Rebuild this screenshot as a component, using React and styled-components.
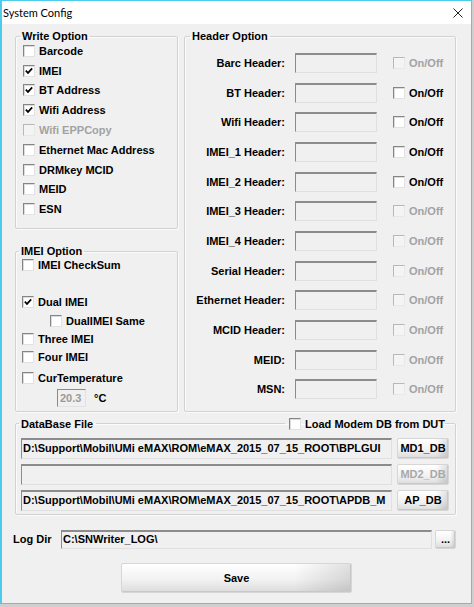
import React from 'react';
import styled, { createGlobalStyle } from 'styled-components';

const Global = createGlobalStyle`
  html, body { margin: 0; padding: 0; background: #cfcfcf; }
  body { width: 474px; height: 607px; overflow: hidden; font-family: "Liberation Sans", Arial, sans-serif; }
  * { box-sizing: border-box; }
`;

const Window = styled.div`
  width: 472px;
  height: 604px;
  border: 1px solid #4ccbea;
  border-left-width: 2px;
  background: #f0f0f0;
  display: flex;
  flex-direction: column;
`;

const TitleBar = styled.div`
  height: 23px;
  flex: none;
  background: #fff;
  display: flex;
  align-items: center;
  justify-content: space-between;
  padding: 0 8px 0 1px;
  font-family: Lato, "Noto Sans", sans-serif;
  font-size: 11px;
  color: #000;
`;

const Body = styled.div`
  padding: 5px 15px 0 11px;
  display: flex;
  flex-direction: column;
`;

const TopRow = styled.div`
  display: flex;
  gap: 6px;
  margin-left: 2px;
`;

const LeftCol = styled.div`
  width: 163px;
  display: flex;
  flex-direction: column;
  gap: 15px;
`;

const Group = styled.fieldset`
  margin: 0;
  min-width: 0;
  border: 1px solid #d2d2d2;
  border-radius: 2px;
  box-shadow: inset 1px 1px 0 #fbfbfb, 1px 1px 0 #fbfbfb;
  padding: 0 0 ${p => p.$pb || 0}px 0;
  flex: ${p => (p.$grow ? 1 : 'none')};
`;

const Legend = styled.legend`
  padding: 0 2px;
  margin-left: ${p => p.$ml || 4}px;
  font-size: 11px;
  font-weight: bold;
  line-height: 14px;
  color: #000;
`;

const WideLegend = styled(Legend)`
  display: flex;
  align-items: center;
  width: 426px;
  padding: 0 0 0 2px;
`;

const LegendLine = styled.span`
  flex: 1;
  height: 1px;
  margin: 0 4px 0 3px;
  background: #d2d2d2;
  box-shadow: 0 1px 0 #fbfbfb;
`;

const List = styled.div`
  display: flex;
  flex-direction: column;
  margin-top: ${p => p.$mt || 0}px;
  padding-left: ${p => p.$pl || 0}px;
`;

const CheckRow = styled.label`
  display: flex;
  align-items: center;
  gap: 4px;
  height: ${p => p.$h || 19.8}px;
  margin-top: ${p => p.$mt || 0}px;
  padding-left: ${p => p.$indent || 0}px;
  font-size: 11px;
  font-weight: bold;
  white-space: nowrap;
  color: ${p => (p.$disabled ? '#a2a2a2' : '#000')};
`;

const Box = styled.span`
  width: 12px;
  height: 12px;
  flex: none;
  border: 1px solid;
  border-color: ${p => (p.$disabled ? '#b8b8b8 #e8e8e8 #e8e8e8 #b8b8b8' : '#858585 #e2e2e2 #e2e2e2 #858585')};
  background: ${p => (p.$disabled ? '#f4f4f4' : '#fff')};
  box-shadow: ${p => (p.$disabled ? 'none' : 'inset 1px 1px 0 #dcdcdc')};
  display: flex;
  align-items: center;
  justify-content: center;
`;

const Check = ({ checked, disabled }) => (
  <Box $disabled={disabled}>
    {checked && (
      <svg width="8" height="8" viewBox="0 0 8 8">
        <path d="M0.8 3.6 L3 5.9 L7.2 1.4" fill="none" stroke="#000" strokeWidth="1.7" />
      </svg>
    )}
  </Box>
);

const Option = ({ label, checked, disabled, indent, h, mt }) => (
  <CheckRow $disabled={disabled} $indent={indent} $h={h} $mt={mt}>
    <Check checked={checked} disabled={disabled} />
    {label}
  </CheckRow>
);

const TempRow = styled.div`
  display: flex;
  align-items: center;
  gap: 8px;
  height: 19px;
  margin-top: 2px;
  padding-left: 35px;
  font-size: 11px;
  font-weight: bold;
`;

const TempBox = styled.div`
  width: 29px;
  height: 18px;
  border: 1px solid;
  border-color: #8a8a8a #e2e2e2 #e2e2e2 #8a8a8a;
  background: #f0f0f0;
  color: #9a9a9a;
  font-size: 11px;
  font-weight: bold;
  line-height: 16px;
  padding-left: 2px;
`;

const HeaderRows = styled.div`
  padding: 5px 0 0 4px;
`;

const HeaderRow = styled.div`
  display: flex;
  align-items: center;
  height: 29.7px;
  font-size: 11px;
  font-weight: bold;
`;

const HeaderLabel = styled.span`
  width: 96px;
  text-align: right;
  white-space: nowrap;
  margin-right: 10px;
`;

const Field = styled.div`
  width: ${p => p.$w}px;
  height: ${p => p.$h || 20}px;
  flex: none;
  border: 1px solid;
  border-top-width: 2px;
  border-color: #8c8c8c #e0e0e0 #e0e0e0 #8c8c8c;
  background: #f0f0f0;
  font-size: 11px;
  font-weight: bold;
  color: #000;
  white-space: nowrap;
  overflow: hidden;
  text-overflow: clip;
  padding-left: 1px;
  line-height: ${p => (p.$h || 20) - 4}px;
`;

const OnOff = styled.div`
  margin-left: 16px;
`;

const DbRows = styled.div`
  display: flex;
  flex-direction: column;
  gap: 5px;
  padding: 7px 5px 0 5px;
`;

const DbRow = styled.div`
  display: flex;
  gap: 5px;
  height: 21px;
`;

const Btn = styled.button`
  width: ${p => p.$w}px;
  height: ${p => p.$h}px;
  margin: 0 0 0 ${p => p.$ml || 0}px;
  padding: 0;
  flex: none;
  border: 1px solid #d6d6d6;
  border-radius: 2px;
  background: linear-gradient(to right, rgba(255, 255, 255, 0) 75%, rgba(0, 0, 0, 0.12) 100%),
    linear-gradient(#ffffff, #f2f2f2 55%, #dcdcdc);
  box-shadow: inset -1px -1px 0 #c8c8c8;
  font-family: "Liberation Sans", Arial, sans-serif;
  font-size: 11px;
  font-weight: bold;
  color: ${p => (p.disabled ? '#a8a8a8' : '#000')};
`;

const LogRow = styled.div`
  display: flex;
  align-items: center;
  height: 19px;
  margin-top: 15px;
  font-size: 11px;
  font-weight: bold;
`;

const LogLabel = styled.span`
  width: 50px;
`;

const SaveRow = styled.div`
  display: flex;
  justify-content: center;
  margin-top: 14px;
  padding-left: 4px;
`;

const DbGroup = styled(Group)`
  margin-top: 5px;
  margin-left: 2px;
`;

const headers = [
  ['Barc Header:', false],
  ['BT Header:', true],
  ['Wifi Header:', true],
  ['IMEI_1 Header:', true],
  ['IMEI_2 Header:', true],
  ['IMEI_3 Header:', false],
  ['IMEI_4 Header:', false],
  ['Serial Header:', false],
  ['Ethernet Header:', false],
  ['MCID Header:', false],
  ['MEID:', false],
  ['MSN:', false],
];

const writeOpts = [
  ['Barcode', false, false],
  ['IMEI', true, false],
  ['BT Address', true, false],
  ['Wifi Address', true, false],
  ['Wifi EPPCopy', false, true],
  ['Ethernet Mac Address', false, false],
  ['DRMkey MCID', false, false],
  ['MEID', false, false],
  ['ESN', false, false],
];

export default function App() {
  return (
    <>
      <Global />
      <Window>
        <TitleBar>
          <span>System Config</span>
          <svg width="10" height="10" viewBox="0 0 10 10">
            <path d="M0.5 0.5 L9.5 9.5 M9.5 0.5 L0.5 9.5" stroke="#222" strokeWidth="1" />
          </svg>
        </TitleBar>
        <Body>
          <TopRow>
            <LeftCol>
              <Group $pb={9}>
                <Legend $ml={4}>Write Option</Legend>
                <List $mt={-2} $pl={7}>
                  {writeOpts.map(([l, c, d]) => (
                    <Option key={l} label={l} checked={c} disabled={d} />
                  ))}
                </List>
              </Group>
              <Group $pb={3}>
                <Legend $ml={3}>IMEI Option</Legend>
                <List $mt={-2} $pl={6}>
                  <Option label="IMEI CheckSum" h={18.4} />
                  <Option label="Dual IMEI" checked h={18.4} mt={18.4} />
                  <Option label="DualIMEI Same" h={18.4} indent={28} />
                  <Option label="Three IMEI" h={18.4} />
                  <Option label="Four IMEI" h={18.4} />
                  <Option label="CurTemperature" h={18.4} mt={2} />
                  <TempRow>
                    <TempBox>20.3</TempBox>
                    <span>°C</span>
                  </TempRow>
                </List>
              </Group>
            </LeftCol>
            <Group $grow $pb={5.5}>
              <Legend $ml={5}>Header Option</Legend>
              <HeaderRows>
                {headers.map(([l, en]) => (
                  <HeaderRow key={l}>
                    <HeaderLabel>{l}</HeaderLabel>
                    <Field $w={82} />
                    <OnOff>
                      <Option label="On/Off" disabled={!en} h={20} />
                    </OnOff>
                  </HeaderRow>
                ))}
              </HeaderRows>
            </Group>
          </TopRow>
          <DbGroup $pb={3}>
            <WideLegend $ml={3}>
              <span>DataBase File</span>
              <LegendLine />
              <Option label="Load Modem DB from DUT" h={14} />
            </WideLegend>
            <DbRows>
              <DbRow>
                <Field $w={371} $h={21}>D:\Support\Mobil\UMi eMAX\ROM\eMAX_2015_07_15_ROOT\BPLGUI</Field>
                <Btn $w={52} $h={21}>MD1_DB</Btn>
              </DbRow>
              <DbRow>
                <Field $w={371} $h={21} />
                <Btn $w={52} $h={21} disabled>MD2_DB</Btn>
              </DbRow>
              <DbRow>
                <Field $w={371} $h={21}>D:\Support\Mobil\UMi eMAX\ROM\eMAX_2015_07_15_ROOT\APDB_M</Field>
                <Btn $w={52} $h={21}>AP_DB</Btn>
              </DbRow>
            </DbRows>
          </DbGroup>
          <LogRow>
            <LogLabel>Log Dir</LogLabel>
            <Field $w={371} $h={19}>C:\SNWriter_LOG\</Field>
            <Btn $w={21} $h={19} $ml={3}>...</Btn>
          </LogRow>
          <SaveRow>
            <Btn $w={231} $h={30}>Save</Btn>
          </SaveRow>
        </Body>
      </Window>
    </>
  );
}
